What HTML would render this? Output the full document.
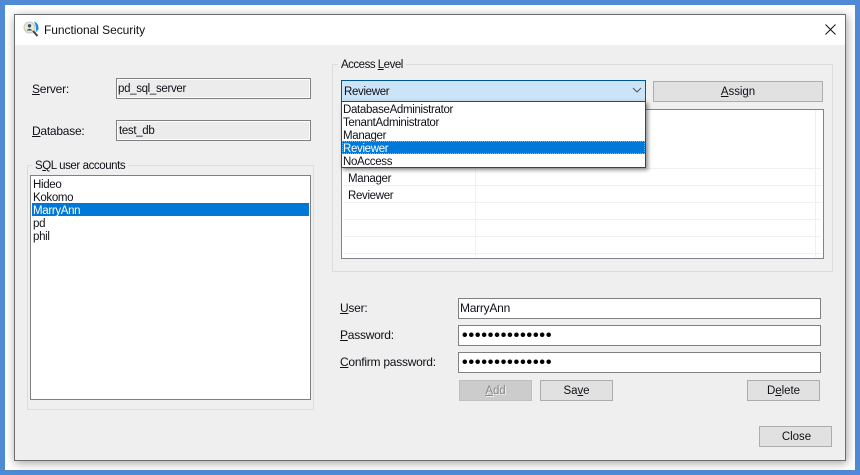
<!DOCTYPE html>
<html><head><meta charset="utf-8"><style>
html,body{margin:0;padding:0}
body{width:860px;height:475px;overflow:hidden;background:#fff;position:relative;font:12px/13px "Liberation Sans",sans-serif;color:#101018}
div{position:absolute;box-sizing:border-box}
.t{white-space:nowrap;letter-spacing:-.25px}
.n{font-size:11.5px;letter-spacing:-.33px;margin-top:1px}
u{text-underline-offset:1px}
.box{border:1px solid #808080;background:#fff}
.ro{background:#ececec;box-shadow:inset 0 0 0 1px #fff}
.btn{width:73px;height:21px;background:#e1e1e1;border:1px solid #adadad;text-align:center;line-height:19px;padding-top:1px;font-size:11.5px;letter-spacing:-.05px}
.grp{border:1px solid #dcdcdc}
.lg{background:#efefef;padding:0 3px;height:13px;margin-top:1px}
.gl{background:#f0f0f0}
.pw{font-size:16px;letter-spacing:.85px;color:#000;font-weight:bold}
</style></head><body>
<div style="left:0;top:0;width:860px;height:475px;border:solid #4f8ad4;border-width:5px"></div>
<div style="left:14px;top:14px;width:832px;height:447px;background:#efefef;border:1px solid #6e6e6e;box-shadow:1px 2px 9px rgba(0,0,0,.38)"></div>
<div style="left:15px;top:15px;width:830px;height:30px;background:#fff"></div>

<svg style="position:absolute;left:23px;top:21px" width="17" height="16" viewBox="0 0 17 16"><circle cx="6.500" cy="6.500" r="5.500" fill="#eee8c8" stroke="#c8c8c8"/><path d="M11 .5Q16 2 15.500 8.500L12.500 11.500Q14 6 11 .5Z" fill="#1f8fe0"/><circle cx="6.500" cy="4.800" r="1.700" fill="#24507e"/><path d="M3.500 9.500Q6.500 6 9.500 9.500Z" fill="#24507e"/><path d="M10 10l4.500 5" stroke="#444" stroke-width="2"/></svg>
<div class="t" style="left:44px;top:23px;letter-spacing:-.05px;line-height:14px;color:#111">Functional Security</div>
<svg style="position:absolute;left:825px;top:24px" width="11" height="11"><path d="M.5.500L10.500 10.500M10.500.500L.5 10.500" stroke="#111" stroke-width="1"/></svg>

<div class="t" style="left:32px;top:83px"><u>S</u>erver:</div>
<div class="box ro" style="left:116px;top:78px;width:195px;height:21px"></div>
<div class="t n" style="left:118px;top:82px">pd_sql_server</div>
<div class="t" style="left:32px;top:125px"><u>D</u>atabase:</div>
<div class="box ro" style="left:116px;top:120px;width:195px;height:21px"></div>
<div class="t n" style="left:119px;top:124px">test_db</div>

<div class="grp" style="left:27px;top:165px;width:287px;height:245px"></div>
<div class="lg t" style="left:32px;top:159px;font-size:11.5px;letter-spacing:-.42px">S<u>Q</u>L user accounts</div>
<div class="box" style="left:30px;top:175px;width:281px;height:225px"></div>
<div class="t n" style="left:33px;top:178px">Hideo</div>
<div class="t n" style="left:33px;top:191px">Kokomo</div>
<div style="left:32px;top:203px;width:277px;height:13px;background:#0078d7"></div>
<div class="t n" style="left:33px;top:204px;color:#fff">MarryAnn</div>
<div class="t n" style="left:33px;top:217px">pd</div>
<div class="t n" style="left:33px;top:230px">phil</div>

<div class="grp" style="left:332px;top:64px;width:501px;height:208px"></div>
<div class="lg t" style="left:338px;top:58px;font-size:11.5px;letter-spacing:-.5px">Access <u>L</u>evel</div>

<div class="box" style="left:341px;top:109px;width:483px;height:150px;border-color:#82828a"></div>
<div class="gl" style="left:343px;top:168px;width:479px;height:1px"></div>
<div class="gl" style="left:343px;top:185px;width:479px;height:1px"></div>
<div class="gl" style="left:343px;top:202px;width:479px;height:1px"></div>
<div class="gl" style="left:343px;top:219px;width:479px;height:1px"></div>
<div class="gl" style="left:343px;top:236px;width:479px;height:1px"></div>
<div class="gl" style="left:343px;top:253px;width:479px;height:1px"></div>
<div class="gl" style="left:475px;top:168px;width:1px;height:89px"></div>
<div class="gl" style="left:815px;top:110px;width:1px;height:147px"></div>
<div class="t n" style="left:348px;top:172px">Manager</div>
<div class="t n" style="left:348px;top:189px">Reviewer</div>

<div style="left:341px;top:80px;width:305px;height:22px;background:#cce4f7;border:1px solid #005499"></div>
<div class="t n" style="left:344px;top:85px">Reviewer</div>
<svg style="position:absolute;left:632px;top:87px" width="10" height="7"><path d="M1 1l4 4 4-4" fill="none" stroke="#555" stroke-width="1"/></svg>
<div style="left:341px;top:101px;width:305px;height:67px;background:#fff;border:1px solid #005499;box-shadow:2px 2px 4px rgba(0,0,0,.45)"></div>
<div class="t n" style="left:343px;top:103px">DatabaseAdministrator</div>
<div class="t n" style="left:343px;top:116px">TenantAdministrator</div>
<div class="t n" style="left:343px;top:129px">Manager</div>
<div style="left:342px;top:141px;width:303px;height:13px;background:#0078d7;outline:1px dotted #e8a050;outline-offset:-1px"></div>
<div class="t n" style="left:343px;top:142px;color:#fff">Reviewer</div>
<div class="t n" style="left:343px;top:155px">NoAccess</div>

<div class="btn" style="left:653px;top:81px;width:170px;height:21px"><u>A</u>ssi<u>g</u>n</div>

<div class="t" style="left:340px;top:302px"><u>U</u>ser:</div>
<div class="box" style="left:458px;top:298px;width:363px;height:21px"></div>
<div class="t" style="left:460px;top:302px">MarryAnn</div>
<div class="t" style="left:340px;top:329px"><u>P</u>assword:</div>
<div class="box" style="left:458px;top:325px;width:363px;height:21px"></div>
<div class="t pw" style="left:462px;top:329px">••••••••••••••</div>
<div class="t" style="left:340px;top:356px"><u>C</u>onfirm password:</div>
<div class="box" style="left:458px;top:352px;width:363px;height:21px"></div>
<div class="t pw" style="left:462px;top:356px">••••••••••••••</div>

<div class="btn" style="left:459px;top:380px;background:#cccccc;border-color:#bfbfbf;color:#8a8a8a;text-shadow:1px 1px 0 #eee"><u>A</u>dd</div>
<div class="btn" style="left:540px;top:380px">Sa<u>v</u>e</div>
<div class="btn" style="left:747px;top:380px">D<u>e</u>lete</div>
<div class="btn" style="left:759px;top:426px;padding-left:2px">Close</div>
</body></html>
